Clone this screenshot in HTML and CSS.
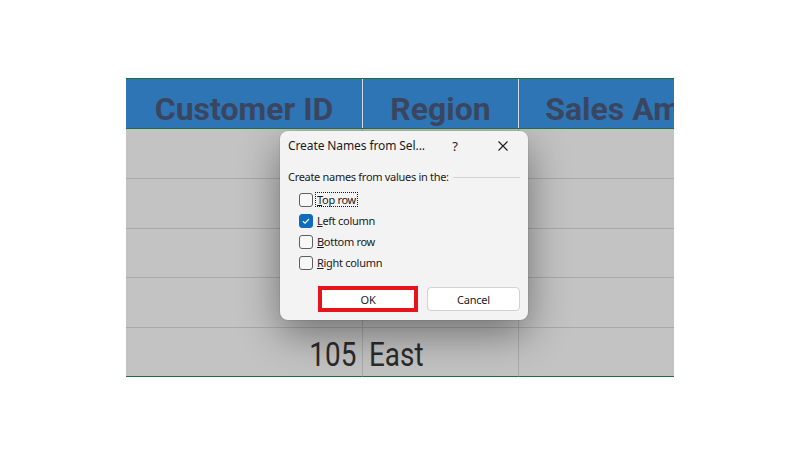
FILE: index.html
```html
<!DOCTYPE html>
<html lang="en">
<head>
<meta charset="utf-8">
<title>Create Names from Selection</title>
<link rel="stylesheet" href="styles.css">
</head>
<body>
<div class="sheet">
  <div class="head">
    <div class="hc">Customer ID</div>
    <div class="hc">Region</div>
    <div class="hc">Sales Amount</div>
  </div>
  <div class="grid">
    <div class="c num"></div><div class="c txt"></div><div class="c"></div>
    <div class="c num"></div><div class="c txt"></div><div class="c"></div>
    <div class="c num"></div><div class="c txt"></div><div class="c"></div>
    <div class="c num"></div><div class="c txt"></div><div class="c"></div>
    <div class="c num last"><span>105</span></div><div class="c txt last"><span>East</span></div><div class="c last"></div>

    <div class="dialog" role="dialog" aria-label="Create Names from Selection">
      <div class="titlebar">
        <span class="title">Create Names from Sel...</span>
        <span class="help">?</span>
        <span class="close">
          <svg width="10" height="10" viewBox="0 0 10 10"><path d="M0.5 0.5 L9.5 9.5 M9.5 0.5 L0.5 9.5" stroke="#1b1b1b" stroke-width="1.1" fill="none"/></svg>
        </span>
      </div>
      <div class="section"><span>Create names from values in the:</span><span class="rule"></span></div>
      <div class="checks">
        <div class="check"><span class="box"></span><span class="lbl focus">Top row</span></div>
        <div class="check"><span class="box on"><svg width="14" height="14" viewBox="0 0 14 14"><path d="M4 7.3 L6 9.2 L10 5" stroke="#fff" stroke-width="1.2" fill="none"/></svg></span><span class="lbl">Left column</span></div>
        <div class="check"><span class="box"></span><span class="lbl">Bottom row</span></div>
        <div class="check"><span class="box"></span><span class="lbl">Right column</span></div>
      </div>
      <div class="actions">
        <button class="btn ok">OK</button>
        <button class="btn">Cancel</button>
      </div>
    </div>
  </div>
</div>
</body>
</html>
```
FILE: styles.css
```css
html, body {
  margin: 0;
  padding: 0;
  background: #ffffff;
}

.sheet {
  margin: 78px 0 0 126px;
  width: 548px;
  overflow: hidden;
}

/* header band */
.head {
  display: grid;
  grid-template-columns: 237px 156px 254px;
  height: 49px;
  border-top: 1px solid #1f6f3f;
  border-bottom: 1px solid #1f6f3f;
  background: #2e75b6;
}

.hc {
  display: flex;
  align-items: flex-end;
  justify-content: center;
  border-right: 1px solid #d3d9e2;
  font-family: Roboto, "Noto Sans", sans-serif;
  font-weight: 700;
  font-size: 32px;
  color: #3a4660;
  white-space: nowrap;
}

/* dimmed cell area */
.grid {
  position: relative;
  overflow: hidden;
  display: grid;
  grid-template-columns: 237px 156px 254px;
  grid-template-rows: 50px 50px 49px 50px 49px;
  background: #c3c3c3;
}

.c {
  box-sizing: border-box;
  display: flex;
  align-items: flex-end;
  padding-bottom: 2px;
  border-right: 1px solid #a9a9a9;
  border-bottom: 1px solid #a9a9a9;
  font-family: Roboto, "Noto Sans", sans-serif;
  font-size: 34px;
  color: #2b2b2b;
  white-space: nowrap;
}

.c.last {
  border-bottom-color: #1f6f3f;
}

.c span {
  display: inline-block;
  transform: scaleX(0.82);
}

.num {
  justify-content: flex-end;
  padding-right: 6px;
}

.num span {
  transform-origin: right bottom;
}

.txt {
  padding-left: 6px;
}

.txt span {
  transform-origin: left bottom;
}

/* dialog */
.dialog {
  position: absolute;
  top: 2px;
  left: 154px;
  width: 248px;
  height: 189px;
  box-sizing: border-box;
  display: flex;
  flex-direction: column;
  padding: 7px 8px 8px 8px;
  background: #f3f3f3;
  border-radius: 8px;
  box-shadow: 0 14px 40px rgba(0, 0, 0, 0.42), 0 0 0 1px rgba(0, 0, 0, 0.06);
  font-family: "Noto Sans", "Open Sans", sans-serif;
  font-size: 11px;
  letter-spacing: -0.3px;
  line-height: 16px;
  color: #1b1b1b;
}

.titlebar {
  display: flex;
  align-items: center;
  height: 16px;
  font-size: 12px;
  letter-spacing: -0.1px;
}

.title {
  flex: 1;
  white-space: nowrap;
}

.help {
  width: 20px;
  text-align: center;
  margin-right: 23px;
  font-size: 13px;
}

.close {
  width: 30px;
  display: flex;
  justify-content: center;
  margin-right: 2px;
}

.section {
  display: flex;
  align-items: center;
  margin-top: 15px;
  white-space: nowrap;
}

.rule {
  flex: 1;
  height: 1px;
  margin-left: 4px;
  background: #d4d4d4;
}

.checks {
  margin-top: 4px;
  padding-left: 11px;
}

.check {
  display: flex;
  align-items: center;
  height: 21px;
}

.box {
  box-sizing: border-box;
  width: 14px;
  height: 14px;
  border: 1px solid #5f5f5f;
  border-radius: 3px;
  background: #f7f7f7;
  display: flex;
}

.box.on {
  border-color: #0f6cbd;
  background: #0f6cbd;
}

.box.on svg {
  margin: -1px;
}

.lbl {
  display: inline-block;
  margin-left: 2px;
  padding: 1px 1px 0 1px;
  border: 1px dotted transparent;
  line-height: 12px;
  white-space: nowrap;
}

/* access-key letter */
.lbl::first-letter {
  text-decoration: underline;
}

.lbl.focus {
  border-color: #1b1b1b;
}

.actions {
  display: flex;
  align-items: center;
  margin-top: auto;
  padding-left: 30px;
  gap: 9px;
}

.btn {
  box-sizing: border-box;
  width: 93px;
  height: 24px;
  padding: 0;
  border: 1px solid #d1d1d1;
  border-radius: 4px;
  background: #ffffff;
  font-family: "Noto Sans", "Open Sans", sans-serif;
  font-size: 11px;
  letter-spacing: -0.2px;
  color: #1b1b1b;
}

.btn.ok {
  width: 100px;
  height: 26px;
  border: 4px solid #e8141c;
  border-radius: 0;
}
```
